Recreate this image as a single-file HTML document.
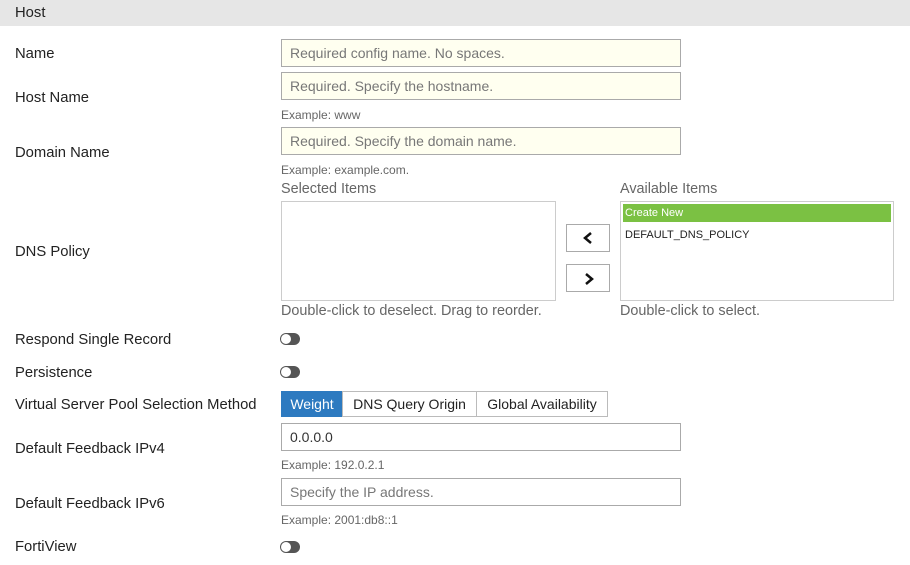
<!DOCTYPE html><html><head><style>
body{margin:0;width:910px;height:565px;background:#fff;font-family:"Liberation Sans",sans-serif;color:#333;position:relative;overflow:hidden}
.a{position:absolute;white-space:nowrap}
.hd{left:0;top:0;width:910px;height:26px;background:#e6e6e6}
.l{left:15px;font-size:14.8px;line-height:16px;color:#222}
.in{left:281px;border:1px solid #aaa;background:#fffff0;font-size:14px;line-height:26px;color:#777;padding-left:8px;box-sizing:border-box;width:400px;height:28px}
.ex{left:281px;font-size:12px;color:#666;line-height:14px}
.tg{left:280px;width:20px;height:12px;border-radius:6px;background:#555}
.tg:after{content:"";position:absolute;left:1px;top:1px;width:10px;height:10px;border-radius:5px;background:#fff}
.box{border:1px solid #ccc;box-sizing:border-box}
.btn{left:566px;width:44px;height:28px;border:1px solid #aaa;box-sizing:border-box;background:#fff}
.sg{top:391px;height:26px;border:1px solid #bbb;box-sizing:border-box;font-size:14px;line-height:24px;text-align:center;color:#222}
</style></head><body>
<div class="a hd"></div>
<div class="a l" style="top:5px">Host</div>
<div class="a l" style="top:46px">Name</div>
<div class="a in" style="top:39px">Required config name. No spaces.</div>
<div class="a l" style="top:90px">Host Name</div>
<div class="a in" style="top:72px">Required. Specify the hostname.</div>
<div class="a ex" style="top:108px">Example: www</div>
<div class="a l" style="top:145px">Domain Name</div>
<div class="a in" style="top:127px">Required. Specify the domain name.</div>
<div class="a ex" style="top:163px">Example: example.com.</div>
<div class="a l" style="top:244px">DNS Policy</div>
<div class="a" style="left:281px;top:181px;font-size:14.4px;color:#666">Selected Items</div>
<div class="a" style="left:620px;top:181px;font-size:14.4px;color:#666">Available Items</div>
<div class="a box" style="left:281px;top:201px;width:275px;height:100px"></div>
<div class="a box" style="left:620px;top:201px;width:274px;height:100px"></div>
<div class="a" style="left:623px;top:204px;width:268px;height:18px;background:#7bc143;color:#fff;font-size:11px;line-height:19px;padding-left:2px;box-sizing:border-box">Create New</div>
<div class="a" style="left:625px;top:229px;font-size:11px;color:#222">DEFAULT_DNS_POLICY</div>
<div class="a btn" style="top:224px"><svg width="44" height="28"><path d="M24 8L18 13L24 18" stroke="#111" stroke-width="2.5" fill="none"/></svg></div>
<div class="a btn" style="top:264px"><svg width="44" height="28"><path d="M19 9L25 14L19 19" stroke="#111" stroke-width="2.5" fill="none"/></svg></div>
<div class="a" style="left:281px;top:303px;font-size:14.4px;color:#666">Double-click to deselect. Drag to reorder.</div>
<div class="a" style="left:620px;top:303px;font-size:14.4px;color:#666">Double-click to select.</div>
<div class="a l" style="top:332px">Respond Single Record</div>
<div class="a tg" style="top:333px"></div>
<div class="a l" style="top:365px">Persistence</div>
<div class="a tg" style="top:366px"></div>
<div class="a l" style="top:397px">Virtual Server Pool Selection Method</div>
<div class="a sg" style="left:281px;width:62px;background:#2d7ac0;border-color:#2d7ac0;color:#fff">Weight</div>
<div class="a sg" style="left:342px;width:135px">DNS Query Origin</div>
<div class="a sg" style="left:476px;width:132px">Global Availability</div>
<div class="a l" style="top:441px">Default Feedback IPv4</div>
<div class="a in" style="top:423px;background:#fff;color:#333">0.0.0.0</div>
<div class="a ex" style="top:458px">Example: 192.0.2.1</div>
<div class="a l" style="top:496px">Default Feedback IPv6</div>
<div class="a in" style="top:478px;background:#fff">Specify the IP address.</div>
<div class="a ex" style="top:513px">Example: 2001:db8::1</div>
<div class="a l" style="top:539px">FortiView</div>
<div class="a tg" style="top:541px"></div>
</body></html>
